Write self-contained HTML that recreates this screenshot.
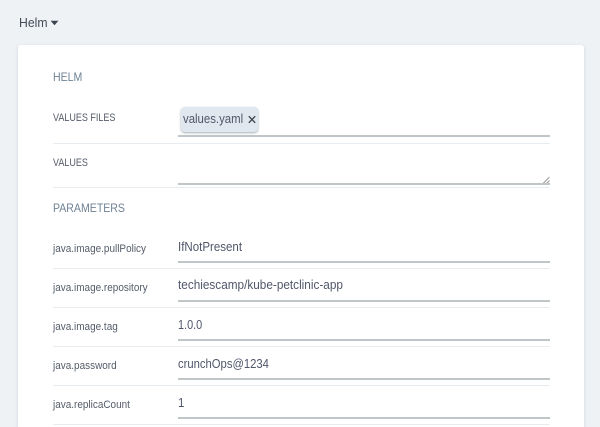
<!DOCTYPE html>
<html>
<head>
<meta charset="utf-8">
<style>
html,body{margin:0;padding:0;width:600px;height:427px;overflow:hidden;background:#eef2f5;font-family:"Liberation Sans",sans-serif;color:#4a5160}
#p{position:relative;width:600px;height:427px;overflow:hidden;background:#eef2f5}
.a{position:absolute;white-space:nowrap;transform-origin:left center}
.card{position:absolute;left:18px;top:45px;width:566px;height:382px;background:#fff;border-radius:3px 3px 0 0;box-shadow:0 1px 3px rgba(120,135,150,.3)}
.h{left:53px;font-size:12px;line-height:14px;color:#6f8294;transform:scaleX(.88)}
.l{left:53px;font-size:10.6px;line-height:12px;color:#555c69;transform:scaleX(.94)}
.c{transform:scaleX(.85)}
.v{left:178px;font-size:12.8px;line-height:15px;color:#50576a}
.u{position:absolute;left:178px;width:372px;height:2px;background:#c0c6c8}
.d{position:absolute;left:53px;width:497px;height:1px;background:#e6ecef}
</style>
</head>
<body>
<div id="p">
<div class="a" style="left:19px;top:15px;font-size:13px;line-height:16px;color:#444b57;transform:scaleX(.94)">Helm</div>
<svg class="a" style="left:50px;top:20px" width="9" height="6" viewBox="0 0 9 6"><path d="M0.6 0.8H8.4L4.5 5.2Z" fill="#3c4350"/></svg>
<div class="card"></div>

<div class="a h" style="top:70px">HELM</div>
<div class="a l c" style="top:112px">VALUES FILES</div>
<div class="a" style="left:181px;top:107px;width:77px;height:25px;background:#e1e7ee;border-radius:4px;box-shadow:0 1px 2px rgba(90,105,120,.55)"></div>
<div class="a v" style="left:183px;top:111px;transform:scaleX(.89)">values.yaml</div>
<svg class="a" style="left:248px;top:115px" width="8" height="9" viewBox="0 0 8 9"><path d="M0.8 1.2L7.2 7.8M7.2 1.2L0.8 7.8" stroke="#3f4653" stroke-width="1.4" fill="none"/></svg>
<div class="u" style="top:135px"></div>
<div class="d" style="top:143px"></div>

<div class="a l c" style="top:157px">VALUES</div>
<svg class="a" style="left:542px;top:176px" width="8" height="8" viewBox="0 0 8 8"><path d="M1 7.5L7.5 1M4.5 7.5L7.5 4.5" stroke="#9a9a9a" stroke-width="1" fill="none"/></svg>
<div class="u" style="top:183px"></div>
<div class="d" style="top:187px"></div>

<div class="a h" style="top:201px">PARAMETERS</div>

<div class="a l" style="top:243px">java.image.pullPolicy</div>
<div class="a v" style="top:239px;transform:scaleX(.9)">IfNotPresent</div>
<div class="u" style="top:261px"></div>
<div class="d" style="top:268px"></div>

<div class="a l" style="top:282px">java.image.repository</div>
<div class="a v" style="top:277px;transform:scaleX(.92)">techiescamp/kube-petclinic-app</div>
<div class="u" style="top:300px"></div>
<div class="d" style="top:307px"></div>

<div class="a l" style="top:321px">java.image.tag</div>
<div class="a v" style="top:317px;transform:scaleX(.85)">1.0.0</div>
<div class="u" style="top:339px"></div>
<div class="d" style="top:346px"></div>

<div class="a l" style="top:360px">java.password</div>
<div class="a v" style="top:356px;transform:scaleX(.88)">crunchOps@1234</div>
<div class="u" style="top:378px"></div>
<div class="d" style="top:385px"></div>

<div class="a l" style="top:399px">java.replicaCount</div>
<div class="a v" style="top:395px;transform:scaleX(.9)">1</div>
<div class="u" style="top:417px"></div>
<div class="d" style="top:424px"></div>
</div>
</body>
</html>
